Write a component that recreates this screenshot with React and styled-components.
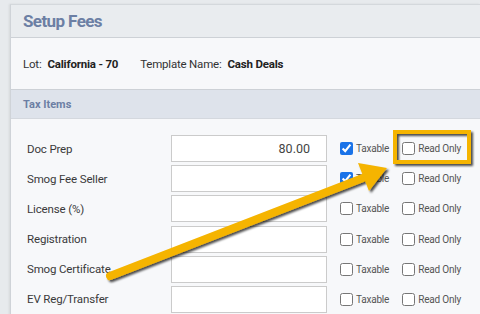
import React from 'react';
import styled, { createGlobalStyle } from 'styled-components';

const GlobalStyle = createGlobalStyle`
  body {
    margin: 0;
    background: #e7eaed;
    font-family: Roboto, "Liberation Sans", sans-serif;
    overflow: hidden;
  }
`;

const Page = styled.div`
  position: relative;
  width: 480px;
  height: 314px;
  overflow: hidden;
  padding: 4px 0 0 10px;
  box-sizing: border-box;
`;

const Panel = styled.div`
  background: #f7f8fa;
  border-left: 1px solid #cfd3d8;
  border-top: 1px solid #d4d8dc;
  box-shadow: -1px 0 2px rgba(0, 0, 0, 0.08);
  height: 100%;
`;

const Header = styled.div`
  height: 32px;
  background: #e9ecef;
  border-bottom: 1px solid #cdd1d6;
  display: flex;
  align-items: center;
  padding-left: 12px;
  font-size: 17px;
  letter-spacing: -0.6px;
  font-weight: 700;
  color: #6c7fa4;
`;

const Info = styled.div`
  height: 51px;
  border-bottom: 1px solid #cdd1d6;
  display: flex;
  align-items: center;
  padding-left: 12px;
  font-size: 11.5px;
  letter-spacing: -0.2px;
  color: #333;
`;

const InfoItem = styled.span`
  margin-right: 22px;
  b {
    font-weight: 700;
    margin-left: 6px;
    color: #222;
  }
`;

const Section = styled.div`
  height: 28px;
  background: #dee3eb;
  border-bottom: 1px solid #d4d8de;
  display: flex;
  align-items: center;
  padding-left: 12px;
  font-size: 11px;
  font-weight: 700;
  color: #6c7fa4;
`;

const Body = styled.div`
  padding: 16px 0 0 16px;
  display: grid;
  grid-template-columns: 144px 156px auto auto;
  justify-content: start;
  grid-auto-rows: 27px;
  row-gap: 3.2px;
  align-items: center;
`;

const Label = styled.div`
  font-size: 11.5px;
  letter-spacing: -0.15px;
  color: #3a3a3a;
`;

const Input = styled.div`
  height: 27px;
  box-sizing: border-box;
  border: 1px solid #cbcbcb;
  background: #fff;
  font-size: 12.5px;
  color: #444;
  text-align: right;
  padding: 0 16px 0 6px;
  line-height: 25px;
`;

const Check = styled.label`
  display: flex;
  align-items: center;
  font-size: 10px;
  letter-spacing: -0.2px;
  color: #555;
  margin-left: 13px;
  white-space: nowrap;

  input {
    margin: 0 3px 0 0;
    width: 13px;
    height: 13px;
    accent-color: #1a73e8;
  }
`;

const Overlay = styled.svg`
  position: absolute;
  left: 0;
  top: 0;
  pointer-events: none;
`;

const rows = [
  { name: 'Doc Prep', value: '80.00', taxable: true },
  { name: 'Smog Fee Seller', value: '', taxable: true },
  { name: 'License (%)', value: '', taxable: false },
  { name: 'Registration', value: '', taxable: false },
  { name: 'Smog Certificate', value: '', taxable: false },
  { name: 'EV Reg/Transfer', value: '', taxable: false },
];

export default function App() {
  return (
    <Page>
      <GlobalStyle />
      <Panel>
        <Header>Setup Fees</Header>
        <Info>
          <InfoItem>Lot:<b>California - 70</b></InfoItem>
          <InfoItem>Template Name:<b>Cash Deals</b></InfoItem>
        </Info>
        <Section>Tax Items</Section>
        <Body>
          {rows.map((r) => (
            <React.Fragment key={r.name}>
              <Label>{r.name}</Label>
              <Input>{r.value}</Input>
              <Check>
                <input type="checkbox" defaultChecked={r.taxable} />
                Taxable
              </Check>
              <Check>
                <input type="checkbox" />
                Read Only
              </Check>
            </React.Fragment>
          ))}
        </Body>
      </Panel>
      <Overlay width="480" height="314" viewBox="0 0 480 314">
        <defs>
          <filter id="sh" x="-20%" y="-20%" width="140%" height="140%">
            <feDropShadow dx="2" dy="2" stdDeviation="1.2" floodColor="#000" floodOpacity="0.7" />
          </filter>
        </defs>
        <rect x="395" y="132" width="74" height="30" fill="none" stroke="#f5b400" strokeWidth="4" filter="url(#sh)" />
        <g filter="url(#sh)">
          <line x1="110" y1="276" x2="368" y2="176" stroke="#f5b400" strokeWidth="8" strokeLinecap="round" />
          <polygon points="387,168 358,163 369,191" fill="#f5b400" />
        </g>
      </Overlay>
    </Page>
  );
}
